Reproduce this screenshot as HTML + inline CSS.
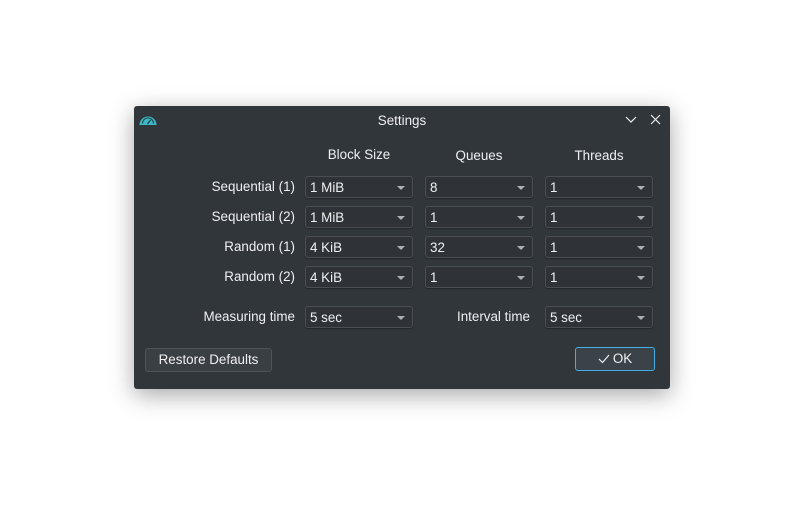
<!DOCTYPE html>
<html><head><style>
body{margin:0;width:790px;height:519px;background:#fff;font-family:"Liberation Sans",sans-serif;font-size:13.4px;color:#eff0f1;position:relative;overflow:hidden}
.win{position:absolute;left:134px;top:106px;width:536px;height:283px;background:#31363b;border-radius:3px;box-shadow:0 6px 24px rgba(0,0,0,.35)}
.t{position:absolute;white-space:nowrap}
.r{text-align:right;width:160px}
.c{text-align:center;width:108px}
.cb{position:absolute;width:106px;height:20px;border:1px solid #4a4f54;background:#2f3337;border-radius:3px;box-shadow:0 1px 1px rgba(0,0,0,.3)}
.cb span{position:absolute;left:4px;top:3px}
.cb i{position:absolute;right:7px;top:9px;border-left:4px solid transparent;border-right:4px solid transparent;border-top:4px solid #aeb1b4}
.btn{position:absolute;height:22px;border:1px solid #4e5358;background:#3a3f44;border-radius:3px;text-align:center;line-height:22px}
</style></head><body>
<div class="win">
<svg style="position:absolute;left:5px;top:6px" width="18" height="14" viewBox="0 0 18 14"><path d="M0.5 13 A8.5 8.5 0 0 1 17.5 13 Z" fill="#3db8c6"/><path d="M3.5 11.5 A5.5 5.5 0 0 1 14.5 11.5" fill="none" stroke="#20474d" stroke-width="1.1"/><path d="M8.5 12 L11.5 8" stroke="#20474d" stroke-width="1.4"/></svg>
<div class="t" style="left:0;width:536px;text-align:center;top:7px">Settings</div>
<svg style="position:absolute;left:491px;top:9px" width="12" height="10"><path d="M1 2 L6 7 L11 2" fill="none" stroke="#eff0f1" stroke-width="1.2"/></svg>
<svg style="position:absolute;left:516px;top:8px" width="11" height="11"><path d="M1 1 L10 10 M10 1 L1 10" stroke="#eff0f1" stroke-width="1.2"/></svg>

<div class="t c" style="left:171px;top:41px">Block Size</div>
<div class="t c" style="left:291px;top:42px">Queues</div>
<div class="t c" style="left:411px;top:42px">Threads</div>

<div class="t r" style="left:1px;top:73px">Sequential (1)</div>
<div class="t r" style="left:1px;top:103px">Sequential (2)</div>
<div class="t r" style="left:1px;top:133px">Random (1)</div>
<div class="t r" style="left:1px;top:163px">Random (2)</div>
<div class="t r" style="left:1px;top:203px">Measuring time</div>
<div class="t" style="left:323px;top:203px">Interval time</div>

<div class="cb" style="left:171px;top:70px"><span>1 MiB</span><i></i></div>
<div class="cb" style="left:291px;top:70px"><span>8</span><i></i></div>
<div class="cb" style="left:411px;top:70px"><span>1</span><i></i></div>
<div class="cb" style="left:171px;top:100px"><span>1 MiB</span><i></i></div>
<div class="cb" style="left:291px;top:100px"><span>1</span><i></i></div>
<div class="cb" style="left:411px;top:100px"><span>1</span><i></i></div>
<div class="cb" style="left:171px;top:130px"><span>4 KiB</span><i></i></div>
<div class="cb" style="left:291px;top:130px"><span>32</span><i></i></div>
<div class="cb" style="left:411px;top:130px"><span>1</span><i></i></div>
<div class="cb" style="left:171px;top:160px"><span>4 KiB</span><i></i></div>
<div class="cb" style="left:291px;top:160px"><span>1</span><i></i></div>
<div class="cb" style="left:411px;top:160px"><span>1</span><i></i></div>
<div class="cb" style="left:171px;top:200px"><span>5 sec</span><i></i></div>
<div class="cb" style="left:411px;top:200px"><span>5 sec</span><i></i></div>

<div class="btn" style="left:11px;top:242px;width:125px">Restore Defaults</div>
<div class="btn" style="left:441px;top:241px;width:78px;border-color:#3daee9;background:#3b4349"><svg width="12" height="10" style="vertical-align:-1px;margin-right:3px"><path d="M1 5 L4.5 8.5 L11 1" fill="none" stroke="#eff0f1" stroke-width="1.2"/></svg>OK</div>
</div>
</body></html>
